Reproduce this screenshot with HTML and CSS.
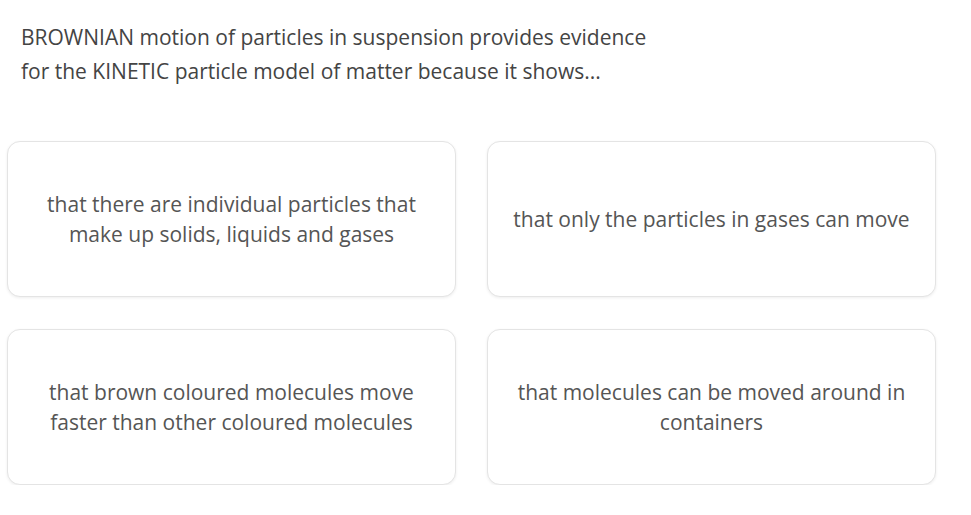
FILE: index.html
```html
<!DOCTYPE html>
<html lang="en">
<head>
<meta charset="utf-8">
<title>Quiz question</title>
<link rel="stylesheet" href="styles.css">
</head>
<body>
<main class="quiz">
  <h1 class="question">BROWNIAN motion of particles in suspension provides evidence<br>for the KINETIC particle model of matter because it shows...</h1>
  <div class="answers">
    <button class="answer">that there are individual particles that make up solids, liquids and gases</button>
    <button class="answer">that only the particles in gases can move</button>
    <button class="answer">that brown coloured molecules move faster than other coloured molecules</button>
    <button class="answer">that molecules can be moved around in containers</button>
  </div>
</main>
</body>
</html>
```
FILE: styles.css
```css
html, body {
  margin: 0;
  padding: 0;
  background: #ffffff;
}
body {
  font-family: "Open Sans", "Liberation Sans", sans-serif;
}
.quiz {
  padding: 20px 35px 0 7px;
}
.question {
  margin: 0 0 0 14px;
  font-size: 21px;
  font-weight: 400;
  line-height: 34px;
  color: #444444;
}
.answers {
  margin-top: 53px;
  display: grid;
  grid-template-columns: 449px 449px;
  grid-auto-rows: 156px;
  column-gap: 31px;
  row-gap: 32px;
}
.answer {
  display: flex;
  align-items: center;
  justify-content: center;
  padding: 0 24px;
  background: #ffffff;
  border: 1px solid #e4e4e4;
  border-radius: 13px;
  box-shadow: 0 1px 3px rgba(0,0,0,0.07);
  font-family: inherit;
  font-size: 21px;
  line-height: 30px;
  color: #555555;
  text-align: center;
}
```
